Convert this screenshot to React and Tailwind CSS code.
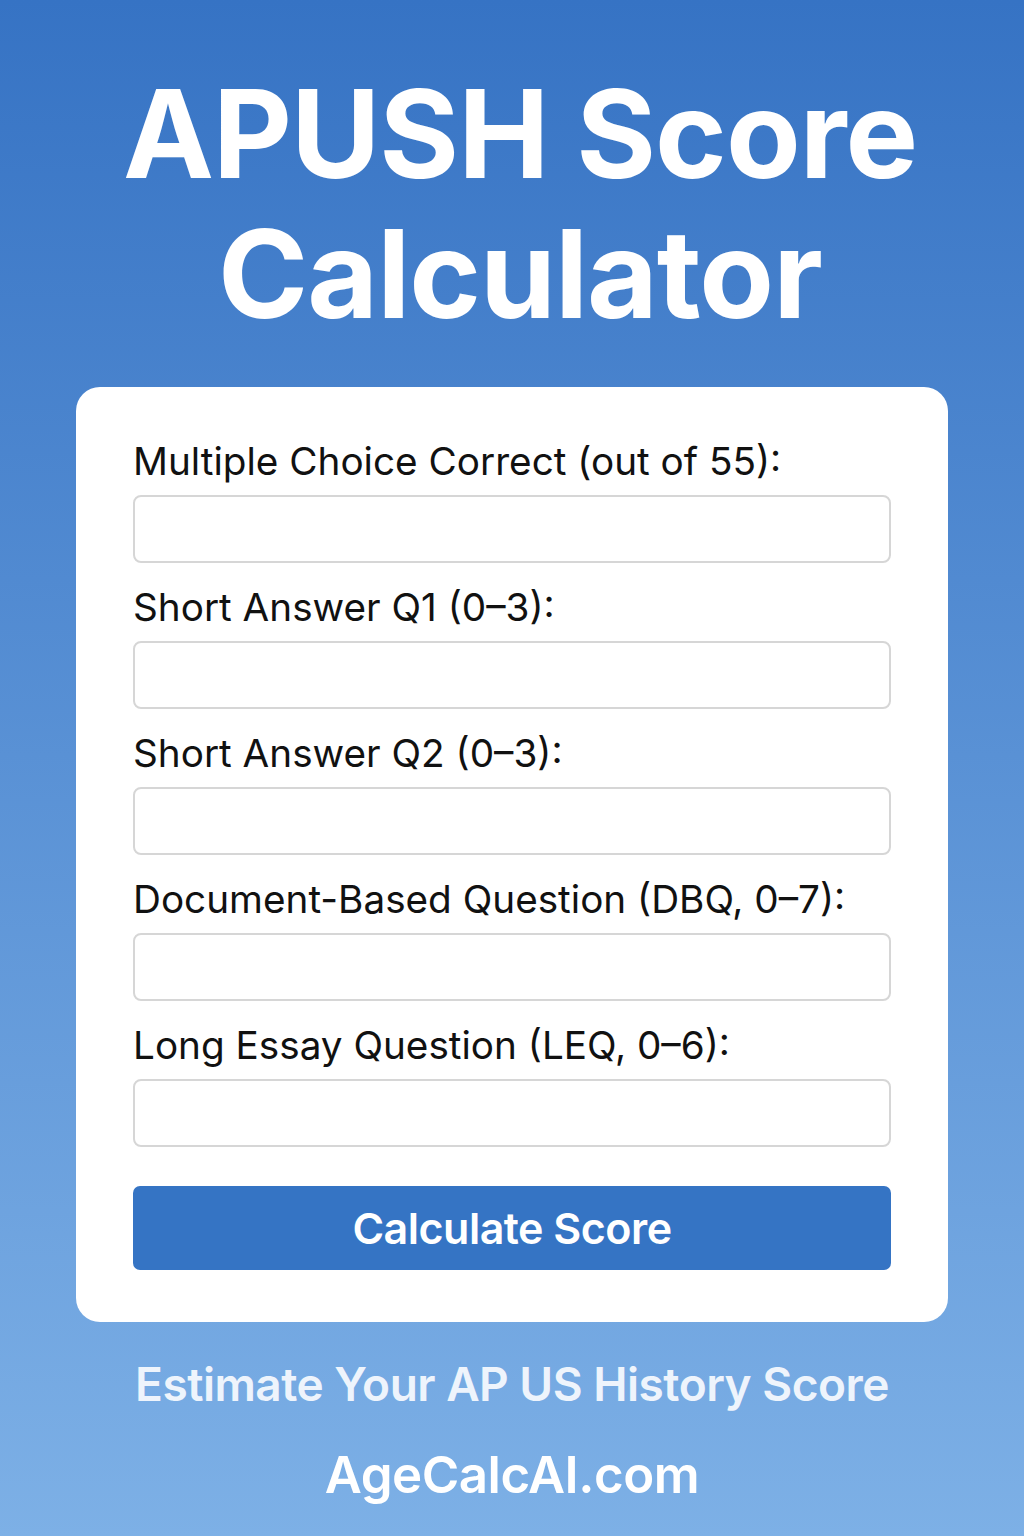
const fields = [
  { id: 'mc', label: 'Multiple Choice Correct (out of 55):' },
  { id: 'saq1', label: 'Short Answer Q1 (0–3):' },
  { id: 'saq2', label: 'Short Answer Q2 (0–3):' },
  { id: 'dbq', label: 'Document-Based Question (DBQ, 0–7):' },
  { id: 'leq', label: 'Long Essay Question (LEQ, 0–6):' },
]

export default function App() {
  return (
    <div
      className="min-h-[1536px] w-full bg-gradient-to-b from-[#3673c4] to-[#7db0e6] flex flex-col items-center"
      style={{ fontFamily: 'Inter, "Noto Sans", sans-serif' }}
    >
      <h1 className="mt-[64px] pl-[16px] text-center text-white font-bold text-[122px] leading-[140px] tracking-[-1px]">
        APUSH Score
        <br />
        Calculator
      </h1>

      <div className="mt-[43px] w-[872px] bg-white rounded-[24px] px-[57px] pt-[50px] pb-[52px]">
        <form className="flex flex-col" onSubmit={(e) => e.preventDefault()}>
          {fields.map((f) => (
            <div key={f.id} className="flex flex-col">
              <label htmlFor={f.id} className="text-[38.7px] leading-[48px] text-[#111] mb-[10px]">
                {f.label}
              </label>
              <input
                id={f.id}
                type="number"
                className="h-[68px] w-full rounded-[8px] border-2 border-[#d6d6d6] bg-white mb-[20px]"
              />
            </div>
          ))}
          <button
            type="submit"
            className="mt-[19px] h-[84px] w-full rounded-[7px] bg-[#3574c4] text-white text-[43px] font-semibold tracking-[-0.5px]"
          >
            Calculate Score
          </button>
        </form>
      </div>

      <p className="mt-[28px] text-[#eef4fc] text-[46px] font-semibold tracking-[-0.5px]">
        Estimate Your AP US History Score
      </p>
      <p className="mt-[18px] text-white text-[51px] font-semibold tracking-[-0.5px]">
        AgeCalcAI.com
      </p>
    </div>
  )
}
